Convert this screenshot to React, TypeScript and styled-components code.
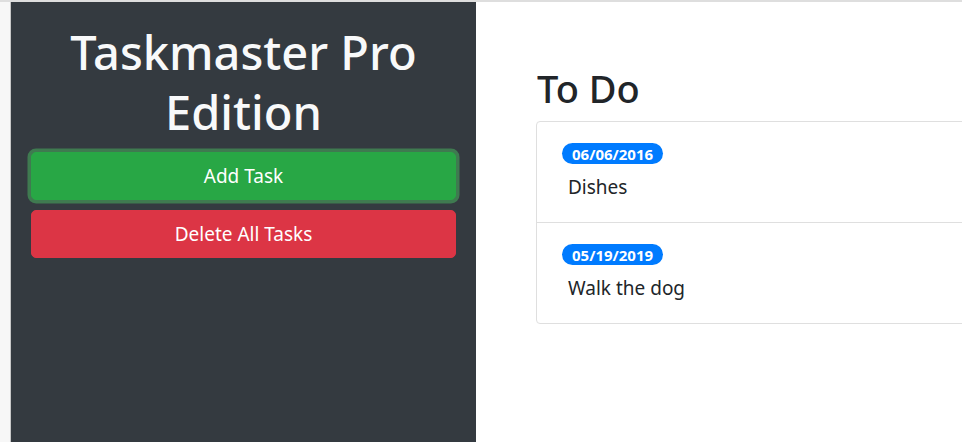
import React from "react";
import styled, { createGlobalStyle } from "styled-components";

const Global = createGlobalStyle`
  html, body {
    margin: 0;
    padding: 0;
    background: #ffffff;
    overflow: hidden;
  }
  body {
    font-family: "Noto Sans", "Open Sans", "Liberation Sans", sans-serif;
    color: #212529;
  }
  * { box-sizing: border-box; }
`;

const Page = styled.div`
  display: flex;
  width: 100%;
  height: 442px;
  border-top: 2px solid #dedede;
`;

const Gutter = styled.div`
  width: 11px;
  flex: none;
  background: #f7f7f7;
  border-right: 1px solid #c8c8c8;
`;

const Sidebar = styled.aside`
  width: 465px;
  flex: none;
  background: #343a40;
  padding: 20px 20px 0;
  display: flex;
  flex-direction: column;
  align-items: stretch;
`;

const Title = styled.h1`
  margin: 0 0 10px;
  color: #f8f9fa;
  font-size: 47px;
  line-height: 60px;
  font-weight: 500;
  text-align: center;
`;

const Button = styled.button<{ $tone: "success" | "danger"; $focused?: boolean }>`
  display: block;
  width: 100%;
  height: 48px;
  margin: 0 0 10px;
  border: 1px solid ${(p) => (p.$tone === "success" ? "#28a745" : "#dc3545")};
  border-radius: 5px;
  background: ${(p) => (p.$tone === "success" ? "#28a745" : "#dc3545")};
  color: #ffffff;
  font-family: inherit;
  font-size: 19px;
  line-height: 28px;
  box-shadow: ${(p) => (p.$focused ? "0 0 0 3.5px #3f7a50" : "none")};
  cursor: pointer;
`;

const Main = styled.main`
  flex: 1;
  min-width: 0;
  overflow: hidden;
  padding: 62px 0 0 60px;
`;

const Heading = styled.h2`
  margin: 0 0 9px 1px;
  font-size: 38px;
  line-height: 48px;
  font-weight: 500;
  color: #212529;
`;

const List = styled.ul`
  list-style: none;
  margin: 0 -12px 0 0;
  padding: 0;
  border: 1px solid #dfdfdf;
  border-radius: 4px;
`;

const Item = styled.li`
  height: 100px;
  padding: 21px 25px 0;
  display: flex;
  flex-direction: column;
  align-items: flex-start;
  & + & {
    border-top: 1px solid #dfdfdf;
    height: 101px;
  }
`;

const Badge = styled.span`
  display: inline-flex;
  align-items: center;
  padding: 0 10px;
  height: 21px;
  border-radius: 11px;
  background: #007bff;
  color: #ffffff;
  font-size: 15px;
  font-weight: 700;
`;

const ItemText = styled.p`
  margin: 8px 0 0 6px;
  font-size: 19px;
  line-height: 30px;
  color: #212529;
`;

const tasks = [
  { date: "06/06/2016", text: "Dishes" },
  { date: "05/19/2019", text: "Walk the dog" },
];

export default function App() {
  return (
    <>
      <Global />
      <Page>
        <Gutter />
        <Sidebar>
          <Title>
            Taskmaster Pro
            <br />
            Edition
          </Title>
          <Button $tone="success" $focused>
            Add Task
          </Button>
          <Button $tone="danger">Delete All Tasks</Button>
        </Sidebar>
        <Main>
          <Heading>To Do</Heading>
          <List>
            {tasks.map((t) => (
              <Item key={t.date}>
                <Badge>{t.date}</Badge>
                <ItemText>{t.text}</ItemText>
              </Item>
            ))}
          </List>
        </Main>
      </Page>
    </>
  );
}
